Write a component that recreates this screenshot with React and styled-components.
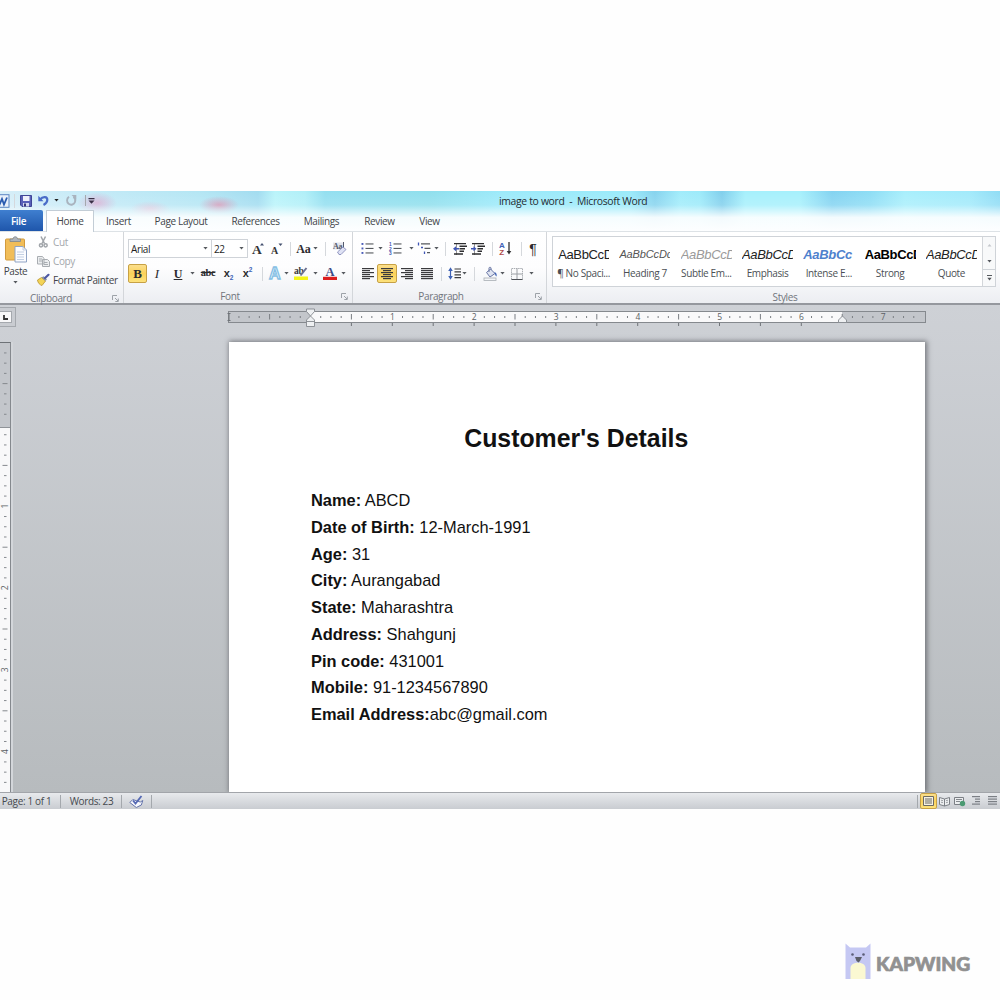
import React from 'react';
import styled, { createGlobalStyle } from 'styled-components';

const UI_FONT = '"Open Sans", "Noto Sans", sans-serif';
const DOC_FONT = '"Liberation Sans", Arial, sans-serif';
const SERIF = '"Liberation Serif", "Times New Roman", serif';

const GlobalStyle = createGlobalStyle`
  * {
    box-sizing: border-box;
  }
  body {
    margin: 0;
    background: #fff;
    overflow: hidden;
  }
  svg {
    display: block;
    overflow: visible;
    flex: none;
  }
`;

const Screen = styled.div`
  width: 1000px;
  height: 1000px;
  padding-top: 191px;
  background: #fefefe;
  display: flex;
  flex-direction: column;
  overflow: hidden;
`;

const WordWindow = styled.div`
  height: 618px;
  flex: none;
  display: flex;
  flex-direction: column;
  font-family: ${UI_FONT};
  font-size: 10px;
  letter-spacing: -0.36px;
  color: #3f4348;
  white-space: nowrap;
`;

/* title bar and tabs share one glass background */
const Chrome = styled.div`
  height: 40px;
  flex: none;
  background:
    linear-gradient(180deg, rgba(255,255,255,0) 0%, rgba(255,255,255,.15) 35%, rgba(255,255,255,.9) 66%, #fdfeff 100%),
    radial-gradient(ellipse 20px 9px at 219px 14px, rgba(222,130,165,.7), transparent),
    radial-gradient(ellipse 20px 11px at 97px 12px, rgba(222,150,195,.65), transparent),
    radial-gradient(ellipse 20px 8px at 150px 18px, rgba(240,170,200,.5), transparent),
    linear-gradient(90deg, #d6eef8 0, #c4eaf7 90px, #b4e6f4 200px, #a2dcf0 258px, #b9f4fa 275px, #b0eff8 305px, #93dff0 325px, #8fdfed 430px, #9ceafa 500px, #9aeafa 630px, #86d3ee 655px, #a0ecfb 680px, #9ceafa 700px, #80cfec 722px, #a6f0fc 745px, #a6f0fc 800px, #83d3f1 832px, #8dddf5 870px, #a8effc 905px, #a2eafb 970px, #8fdcf5 1000px);
`;

const TitleBar = styled.div`
  height: 19px;
  display: flex;
  align-items: center;
  color: #252b30;
  font-size: 10.4px;
  letter-spacing: -0.33px;
`;

const QuickAccess = styled.div`
  width: 499px;
  flex: none;
  display: flex;
  align-items: center;
`;

const Tabs = styled.div`
  height: 21px;
  display: flex;
`;

const Tab = styled.div`
  width: ${p => p.$w}px;
  height: 21px;
  display: flex;
  align-items: center;
  justify-content: center;
  position: relative;
  padding-top: 1px;
  ${p => p.$active && 'height: 22px; background: #fff; border: 1px solid #c3cdd6; border-bottom: 0; margin-left: 3px; padding: 0 0 1px;'}
  ${p => p.$file && 'background: linear-gradient(#3f7fd0, #1f56ab); color: #fff; font-weight: 600; padding-right: 6px; border-radius: 0 2px 0 0;'}
`;

const Ribbon = styled.div`
  height: 74px;
  flex: none;
  display: flex;
  background: linear-gradient(#fff 0, #fdfdfe 50%, #eceef2 100%);
  border-top: 1px solid #dde2e6;
  border-bottom: 2px solid #95989e;
`;

const Group = styled.div`
  width: ${p => p.$w}px;
  height: 71px;
  padding: 4px 0 0 ${p => p.$pad}px;
  border-right: 1px solid ${p => (p.$last ? 'transparent' : '#d3d6da')};
  display: flex;
  flex-direction: column;
  flex: none;
`;

const Row = styled.div`
  height: 25px;
  display: flex;
  align-items: center;
`;

const GroupFoot = styled.div`
  flex: 1;
  display: flex;
  align-items: center;
  justify-content: flex-end;
  padding: 3px 4px 0 0;
  color: #70757c;
`;

const GroupName = styled.span`
  width: ${p => p.$w}px;
  margin-right: ${p => p.$gap}px;
  line-height: 12px;
  text-align: center;
`;

const Cell = styled.div`
  width: ${p => p.$w}px;
  flex: none;
  display: flex;
  align-items: center;
  justify-content: center;
  ${p => p.$on && `
    height: ${p.$h || 19}px;
    background: linear-gradient(#fbdf8d, #fbd25a 50%, #fde27c);
    border: 1px solid #c7a145;
    border-radius: 2px;
  `}
`;

const Glyph = styled.span`
  font-family: ${p => (p.$sans ? DOC_FONT : SERIF)};
  font-size: ${p => p.$size || 13}px;
  font-weight: ${p => (p.$thin ? 400 : 700)};
  font-style: ${p => (p.$italic ? 'italic' : 'normal')};
  text-decoration: ${p => p.$deco || 'none'};
  color: ${p => p.$color || '#2b2b2e'};
  line-height: 1;
  letter-spacing: ${p => p.$track || 0}px;

  sub, sup {
    font-size: 6.5px;
    line-height: 0;
    color: #3f62b5;
  }
`;

const Rule = styled.i`
  width: 1px;
  height: ${p => p.$h || 14}px;
  background: ${p => (p.$dark ? '#a4a8ad' : '#d5d8dc')};
`;

const Combo = styled.div`
  width: ${p => p.$w}px;
  height: 19px;
  padding: 0 3px 0 2px;
  border: 1px solid #cfd3d8;
  margin-right: -1px;
  background: #fff;
  display: flex;
  align-items: center;
  justify-content: space-between;
  color: #1f1f1f;
`;

const ClipBody = styled.div`
  height: 56px;
  display: flex;
`;

const Paste = styled.div`
  width: 31px;
  display: flex;
  flex-direction: column;
  align-items: center;

  span {
    line-height: 13px;
    margin: 2px 0 3px;
  }
`;

const ClipActions = styled.div`
  padding: 0 0 0 6px;
  margin-top: -3px;
`;

const ClipAction = styled.div`
  height: 18.7px;
  display: flex;
  align-items: center;
  gap: 3px;
  color: ${p => (p.$off ? '#a3a7ab' : '#3f4348')};
`;

const Gallery = styled.div`
  width: 444px;
  height: 51px;
  border: 1px solid #cfd3d8;
  background: #fff;
  display: flex;
`;

const StyleItem = styled.div`
  width: 61.3px;
  flex: none;
  display: flex;
  flex-direction: column;
  align-items: center;
  padding-top: 9px;
`;

const Sample = styled.div`
  width: 51px;
  height: 18px;
  line-height: 17px;
  overflow: hidden;
  font-family: ${DOC_FONT};
  font-size: ${p => p.$size || 13}px;
  letter-spacing: ${p => p.$track || -0.35}px;
  font-weight: ${p => (p.$bold ? 700 : 400)};
  font-style: ${p => (p.$italic ? 'italic' : 'normal')};
  color: ${p => p.$color || '#222'};
`;

const StyleName = styled.div`
  line-height: 13px;
  margin-top: 3px;
  color: #4b4f54;
`;

const GalleryScroll = styled.div`
  flex: 1;
  border-left: 1px solid #d3d6da;
  display: flex;
  flex-direction: column;

  div {
    flex: 1;
    display: flex;
    align-items: center;
    justify-content: center;
    background: #f8f9fa;
  }
  div + div + div {
    border-top: 1px solid #cfd3d8;
  }
`;

const Workspace = styled.div`
  height: 487px;
  flex: none;
  display: flex;
  background: linear-gradient(#ced1d6, #b7bbbe);
  overflow: hidden;
`;

const LeftRail = styled.div`
  width: 229px;
  flex: none;
  padding-top: 2px;
`;

const TabSelector = styled.div`
  width: 16px;
  height: 20px;
  border: 1px solid #a5a9ae;
  border-left: 0;
  background: #c9ccd1;
  display: flex;
  align-items: center;
  margin-bottom: 15px;

  div {
    width: 12px;
    height: 12px;
    background: #f8f8f9;
    border: 1px solid #a5a9ae;
    border-left: 0;
    display: flex;
    align-items: center;
    justify-content: center;
  }
`;

const VRuler = styled.div`
  width: 11px;
  height: 451px;
  border-right: 1px solid #85898e;
  border-top: 1px solid #6e7277;
  background: linear-gradient(#c3c6cb 84px, #8f9398 84px, #8f9398 85px, #f8f8f9 85px);
  box-shadow: 2px 0 0 #d3d6da;
`;

const Canvas = styled.div`
  width: 697px;
  flex: none;
  display: flex;
  flex-direction: column;
  padding-top: 6px;
`;

const HRuler = styled.div`
  height: 12px;
  flex: none;
  margin-bottom: 19px;
  margin-left: -1px;
  border: 1px solid #85898e;
  background: linear-gradient(90deg, #c3c6cb 81px, #f9f9fa 81px, #f9f9fa 613px, #c3c6cb 613px);
`;

const Paper = styled.div`
  width: 695.5px;
  flex: 1;
  background: #fff;
  box-shadow: 1px 0 5px 1px rgba(60, 62, 68, .6);
  font-family: ${DOC_FONT};
  color: #111;
  letter-spacing: 0;
  padding: 82px 0 0 82px;
`;

const DocTitle = styled.h1`
  margin: 0 83px 33px 0;
  height: 30px;
  line-height: 30px;
  font-size: 24.85px;
  text-align: center;
`;

const Line = styled.p`
  margin: 0;
  height: 26.75px;
  line-height: 26.75px;
  font-size: 16.4px;
`;

const StatusBar = styled.div`
  height: 17px;
  flex: none;
  display: flex;
  align-items: center;
  padding-left: 1px;
  border-top: 1px solid #a2a5aa;
  background: linear-gradient(#e8eaed, #c9ccd1);
  overflow: hidden;
  color: #45494e;
`;

const StatusSpace = styled.div`
  flex: 1;
`;

const Watermark = styled.div`
  display: flex;
  align-items: center;
  padding: 134px 0 0 844px;
`;

const Brand = styled.span`
  margin: 5px 0 0 4px;
  font-family: Lato, "Open Sans", sans-serif;
  font-weight: 900;
  font-size: 19.3px;
  line-height: 24px;
  color: #919191;
  -webkit-text-stroke: .7px #919191;
`;

const Arrow = ({ color = '#55595e' }) => (
  <svg width="5" height="3" viewBox="0 0 5 3"><path d="M.4 0h4.2L2.5 2.6z" fill={color} /></svg>
);

const Drop = ({ w = 5 }) => <Cell $w={w}><Arrow /></Cell>;
const Divider = ({ w }) => <Cell $w={w}><Rule /></Cell>;

const Launcher = () => (
  <svg width="7" height="7" viewBox="0 0 7 7" fill="none" stroke="#9da2a8">
    <path d="M.5 5V.5H5M3 3l3 3M6.3 3.5v3h-3" />
  </svg>
);

// rows: [x, width] per text line, one every `step` px
const TextLines = ({ rows, step = 2, w = 13, color = '#3a3a3d' }) => (
  <svg width={w} height={rows.length * step} viewBox={`0 0 ${w} ${rows.length * step}`}>
    {rows.map(([x, len], i) => (
      <rect key={i} x={x} y={i * step} width={len} height="1.2" fill={color} />
    ))}
  </svg>
);

const WordLogo = () => (
  <svg width="10" height="14" viewBox="0 0 10 14">
    <rect x="-4" y=".7" width="13" height="12.6" fill="#e9f1fb" stroke="#5b86c4" />
    <path d="M-2 3.5l1.6 7L2 5l2 5.500L7 3.500" fill="none" stroke="#2a5cb0" strokeWidth="1.8" />
  </svg>
);

const Save = () => (
  <svg width="12" height="12" viewBox="0 0 12 12">
    <path d="M.5.5h11v11H2L.5 10z" fill="#5960b8" stroke="#3f4596" />
    <rect x="3" y="1" width="6.500" height="5" fill="#eef0fb" />
    <rect x="3" y="8" width="6" height="3.500" fill="#d5d8ee" />
    <rect x="4" y="8.500" width="2" height="3" fill="#33397f" />
  </svg>
);

const Undo = () => (
  <svg width="11" height="11" viewBox="0 0 11 11" fill="none" stroke="#4a6cc8" strokeWidth="2.200">
    <path d="M2 4.500C5 1 9.500 1.500 9.300 5c-.1 2.500-2 4-3.800 5" />
    <path d="M.3.800v5.500h5.200z" fill="#4a6cc8" stroke="none" />
  </svg>
);

const Redo = () => (
  <svg width="11" height="11" viewBox="0 0 11 11" fill="none" stroke="#a9b3be" strokeWidth="1.900">
    <path d="M3 1.700C.5 3.500.5 7 2.600 8.800c2.300 1.700 5.500.8 6.400-1.800.7-2-.1-4-1.500-5.200" />
    <path d="M5.500 0h4.800v4.600z" fill="#a9b3be" stroke="none" />
  </svg>
);

const PasteIcon = () => (
  <svg width="24" height="27" viewBox="0 0 24 27">
    <rect x="1.500" y="3" width="19" height="21" rx="1" fill="#f1bd58" stroke="#d29a3d" />
    <path d="M6 5.500V3h3c0-3 4.500-3 4.500 0h3v2.500z" fill="#aeb4bb" stroke="#7e858d" strokeWidth=".8" />
    <path d="M11 10.500h8l3.500 3.500v12H11z" fill="#fbfcff" stroke="#8fa3c4" />
    <path d="M19 10.500V14h3.500M13 16h7M13 18.500h7M13 21h7M13 23.500h7" fill="none" stroke="#b5c4dc" strokeWidth=".8" />
  </svg>
);

const Cut = () => (
  <svg width="13" height="12" viewBox="0 0 13 12" fill="none" stroke="#a0a4a9" strokeWidth="1.500">
    <path d="M4 .5l3.500 7M8.500.5L5 7.500" />
    <circle cx="4" cy="9.300" r="1.600" />
    <circle cx="8.600" cy="9.300" r="1.600" />
  </svg>
);

const Copy = () => (
  <svg width="13" height="11" viewBox="0 0 13 11" fill="#eceef0" stroke="#a8acb1">
    <path d="M.5.500h5L7 2.500v5.500H.5zM5.500 3.500h5L12.500 5.500v5h-7z" />
    <path d="M2 3h3M2 5h3M7 6.500h3.500M7 8.500h4" />
  </svg>
);

const Brush = () => (
  <svg width="13" height="12" viewBox="0 0 13 12">
    <path d="M.5 6l4-2.500 4 3.500L5 11.500C3 11 .8 9 .5 6z" fill="#f3d457" stroke="#b9932f" strokeWidth=".8" />
    <path d="M4.500 3.500l2-1.200 3.500 3L8.500 7z" fill="#8c93a0" />
    <path d="M8 4L11.500.800" stroke="#4d58a3" strokeWidth="2.200" strokeLinecap="round" />
  </svg>
);

const GrowFont = ({ down }) => (
  <svg width="14" height="14" viewBox="0 0 14 14">
    <text x="1" y="11.800" fontFamily={SERIF} fontWeight="700" fontSize={down ? 10 : 13.5} fill="#333">A</text>
    <path d={down ? 'M8.500 1.500h4L10.500 4z' : 'M9 3.500h4L11 1z'} fill="#44506e" />
  </svg>
);

const ClearFormat = () => (
  <svg width="15" height="15" viewBox="0 0 15 15">
    <rect x="1" y="1.500" width="11" height="7" fill="#e4e6ee" />
    <text x="1" y="7.500" fontFamily={SERIF} fontWeight="700" fontSize="8" fill="#555a6c">Aa</text>
    <path d="M11.500 1v6.500" stroke="#555a6c" />
    <path d="M5.500 11L11 6l3 2.500-5 5H7z" fill="#dfe2f4" stroke="#7c82b4" strokeWidth=".8" />
  </svg>
);

const TextEffects = () => (
  <svg width="14" height="14" viewBox="0 0 14 14">
    <text
      x="1" y="12" fontFamily={DOC_FONT} fontWeight="700" fontSize="16"
      fill="#e9f6fd" stroke="#86bfe4" strokeWidth="1.300"
    >A</text>
  </svg>
);

const Highlight = () => (
  <svg width="16" height="15" viewBox="0 0 16 15">
    <text x="1" y="8" fontFamily={SERIF} fontWeight="700" fontSize="9.500" fill="#3a3a3d">ab</text>
    <path d="M7.500 9.500L13.500 2" stroke="#6d7292" strokeWidth="2" />
    <rect x="1" y="10.500" width="14" height="3.500" fill="#f4f417" />
  </svg>
);

const FontColor = () => (
  <svg width="14" height="15" viewBox="0 0 14 15">
    <text x="2.500" y="9.500" fontFamily={SERIF} fontWeight="700" fontSize="12.500" fill="#3d4b86">A</text>
    <rect x="0" y="10.800" width="14" height="3.200" fill="#dc1e1e" />
  </svg>
);

const Bullets = ({ numbered }) => (
  <svg width="13" height="13" viewBox="0 0 13 13">
    {[1, 5.5, 10].map((y, i) => (
      <g key={y}>
        {numbered
          ? <text x="0" y={y + 3} fontFamily={DOC_FONT} fontSize="4.800" fontWeight="700" fill="#3f55b5">{i + 1}</text>
          : <rect x=".5" y={y} width="1.900" height="1.900" fill="#4b5cb8" />}
        <rect x="4.500" y={y + 0.4} width="8" height="1.100" fill="#55585d" />
      </g>
    ))}
  </svg>
);

const Multilevel = () => (
  <svg width="15" height="13" viewBox="0 0 15 13">
    <path d="M1.500.500v3M4 5.500h2M7.500 9.500v2.500" stroke="#3f55b5" strokeWidth="1.300" />
    <path d="M4 1.800h9M7.500 6.300h6M10 10.700h3" stroke="#55585d" strokeWidth="1.200" />
  </svg>
);

const Indent = ({ right }) => (
  <svg width="14" height="12" viewBox="0 0 14 12">
    <path d="M1 .6h12M6.500 3.300H14M6.500 5.700H12M6.500 8.200H11M1 11h9" stroke="#2e2e31" strokeWidth="1.400" />
    <path d="M3.500.5v11" stroke="#2e2e31" strokeDasharray="1 1" />
    <path d={right ? 'M2.500 3.200L5.500 5.700 2.500 8.200zM0 5h3v1.500H0z' : 'M3 3.200L0 5.700l3 2.500zM3 5h3v1.500H3z'} fill="#3f55b5" />
  </svg>
);

const Sort = () => (
  <svg width="13" height="15" viewBox="0 0 13 15">
    <text x="0" y="6.500" fontFamily={DOC_FONT} fontWeight="700" fontSize="8" fill="#3f62b5">A</text>
    <text x=".3" y="14.300" fontFamily={DOC_FONT} fontWeight="700" fontSize="8" fill="#b04a4a">Z</text>
    <path d="M10 1v10.500" stroke="#2e2e31" strokeWidth="1.300" />
    <path d="M7.700 10h4.600L10 13.500z" fill="#2e2e31" />
  </svg>
);

const LineSpacing = () => (
  <svg width="13" height="13" viewBox="0 0 13 13">
    <path d="M2.500 2.500v8" stroke="#3f62b5" strokeWidth="1.200" />
    <path d="M.2 4L2.500.3 4.800 4zM.2 9l2.300 3.700L4.800 9z" fill="#3f62b5" />
    <path d="M6.500 2h6.500M6.500 4.900H13M6.500 7.800H13M6.500 10.700H13" stroke="#3a3a3d" strokeWidth="1.200" />
  </svg>
);

const Shading = () => (
  <svg width="15" height="14" viewBox="0 0 15 14">
    <path d="M3.500 5.500L7.500 2l4.500 4.500-5 3.500z" fill="#dfe4f1" stroke="#6976a4" />
    <path d="M6 5V1c0-1 2-1 2 0v2" fill="none" stroke="#6976a4" />
    <path d="M11.500 5c2 .5 2.500 2.500 2 4.500-1-.5-1.500-2-2-4.500z" fill="#3f62b5" />
    <rect x="1" y="11" width="12" height="2.500" fill="#f4f5f7" stroke="#a9adb3" strokeWidth=".8" />
  </svg>
);

const Borders = () => (
  <svg width="12" height="12" viewBox="0 0 12 12" fill="none">
    <path d="M.5.500h11v11H.5z" stroke="#a9adb2" strokeDasharray="1.500 .7" />
    <path d="M6 .5v11M.5 6h11" stroke="#9a9ea4" />
    <path d="M.5 11.500h11" stroke="#4c5056" />
  </svg>
);

const Proofing = () => (
  <svg width="15" height="13" viewBox="0 0 15 13">
    <path d="M.8 7.500l3-3 3.500 1.200 4 1.300 2.500-1.500-1.500 4.500-5 2.500z" fill="#f7f8fc" stroke="#6574ac" />
    <path d="M4 5.500l2.500 3L12.500 1" fill="none" stroke="#5468b4" strokeWidth="1.800" />
  </svg>
);

const PrintLayout = () => (
  <svg width="11" height="10" viewBox="0 0 11 10" fill="none" stroke="#6c6a63">
    <path d="M.5.500h10v9H.5z" fill="#f4f1e4" />
    <path d="M2 3h7M2 5h7M2 7h7" />
  </svg>
);

const ReadingView = () => (
  <svg width="11" height="11" viewBox="0 0 11 11" fill="#eceef0" stroke="#7b7f85">
    <path d="M.5 1.500L5.500 3l5-1.500v7l-5 1.500-5-1.500zM5.500 3v7" />
    <path d="M2 4.200l2 .5M2 6.200l2 .5M7 4.700l2-.5M7 6.700l2-.5" strokeWidth=".7" />
  </svg>
);

const WebLayout = () => (
  <svg width="12" height="11" viewBox="0 0 12 11">
    <path d="M.5 1.500h9v7h-9z" fill="#eceef0" stroke="#7b7f85" />
    <path d="M2 3.500h6M2 5.500h4" stroke="#6b6f75" strokeWidth=".8" />
    <circle cx="8.500" cy="7.500" r="2.700" fill="#4b9a72" />
  </svg>
);

// eighth-inch marks; whole inches carry their number
const INCH = 81.8;

const HorizontalMarks = () => {
  const marks = [];
  for (let n = -7; n <= 59; n += 1) {
    const x = 81.5 + (n * INCH) / 8;
    if (n % 8 === 0 && n !== 0) {
      marks.push(
        <text key={n} x={x} y="8" textAnchor="middle" fontFamily={UI_FONT} fontSize="8.500" fill="#5b5f64">{n / 8}</text>,
      );
    } else if (n !== 0) {
      const half = n % 4 === 0;
      marks.push(<rect key={n} x={x - 0.5} y={half ? 2 : 4} width="1" height={half ? 5.5 : 2} fill="#7a7e83" />);
    }
    if (n > 0 && n <= 48 && n % 4 === 0) {
      marks.push(<rect key={`t${n}`} x={x - 0.5} y="11" width="1" height="3" fill="#6f7378" />);
    }
  }
  return (
    <svg width="695" height="10" viewBox="0 0 695 10">
      {marks}
      <path d="M-1.500 1.500h3M0 1.500v7M-1.500 8.500h3" stroke="#6f7378" fill="none" />
      <g fill="#eef0f2" stroke="#85898e" strokeWidth=".9">
        <path d="M77.500-3h8v2.500l-4 4.500-4-4.500z" />
        <path d="M81.500 4l4 4v6.500h-8V8zM77.500 9.500h8" />
        <path d="M613.500 4l4 4v2.500h-8V8z" />
      </g>
    </svg>
  );
};

const VerticalMarks = () => {
  const marks = [];
  for (let n = -7; n <= 35; n += 1) {
    const y = 81.5 + (n * INCH) / 8;
    if (n > 0 && n % 8 === 0) {
      marks.push(
        <text
          key={n} x="5" y={y} dy="2.800" textAnchor="middle" transform={`rotate(-90 5 ${y})`}
          fontFamily={UI_FONT} fontSize="8.500" fill="#5b5f64"
        >{n / 8}</text>,
      );
    } else if (n !== 0) {
      const half = n % 4 === 0;
      marks.push(<rect key={n} x={half ? 2.5 : 4} y={y - 0.5} width={half ? 5 : 2.5} height="1" fill="#85898e" />);
    }
  }
  return <svg width="10" height="449" viewBox="0 0 10 449">{marks}</svg>;
};

const KapwingCat = () => (
  <svg width="28" height="37" viewBox="0 0 28 37">
    <path d="M1.500.500L6 4.500h16L26.500.500v35.500h-25z" fill="#c5c8f3" />
    <path d="M6.500 36V25c0-7 15-7 15 0v11z" fill="#fbf8d2" />
    <circle cx="8.500" cy="11.500" r="1.300" fill="#5b5d78" />
    <circle cx="19.500" cy="11.500" r="1.300" fill="#5b5d78" />
    <path d="M11 14h7l-2 4-1.500 1.500L12.500 18z" fill="#5b5d68" />
  </svg>
);

const TABS = [
  ['Insert', 49], ['Page Layout', 76], ['References', 73], ['Mailings', 59], ['Review', 57], ['View', 43],
];

const STYLES = [
  { name: '¶ No Spaci...', sample: 'AaBbCcD' },
  { name: 'Heading 7', sample: 'AaBbCcDd', size: 11, track: -0.15, italic: true, color: '#555' },
  { name: 'Subtle Em...', sample: 'AaBbCcD', italic: true, color: '#9a9a9a' },
  { name: 'Emphasis', sample: 'AaBbCcD', italic: true },
  { name: 'Intense E...', sample: 'AaBbCc', italic: true, bold: true, color: '#4e81cd' },
  { name: 'Strong', sample: 'AaBbCcD', bold: true, color: '#000' },
  { name: 'Quote', sample: 'AaBbCcD', italic: true },
];

const DETAILS = [
  ['Name:', ' ABCD'],
  ['Date of Birth:', ' 12-March-1991'],
  ['Age:', ' 31'],
  ['City:', ' Aurangabad'],
  ['State:', ' Maharashtra'],
  ['Address:', ' Shahgunj'],
  ['Pin code:', ' 431001'],
  ['Mobile:', ' 91-1234567890'],
  ['Email Address:', 'abc@gmail.com'],
];

const LONG = 12;
const ragged = side => [LONG, 8, LONG, 8, LONG, 8].map((len) => {
  if (side === 'left') return [0, len];
  if (side === 'right') return [LONG - len, len];
  return [(LONG - len) / 2, len];
});

const ClipboardGroup = () => (
  <Group $w={124} $pad={0}>
    <ClipBody>
      <Paste>
        <PasteIcon />
        <span>Paste</span>
        <Arrow />
      </Paste>
      <ClipActions>
        <ClipAction $off><Cut />Cut</ClipAction>
        <ClipAction $off><Copy />Copy</ClipAction>
        <ClipAction><Brush />Format Painter</ClipAction>
      </ClipActions>
    </ClipBody>
    <GroupFoot><GroupName $w={80} $gap={21}>Clipboard</GroupName><Launcher /></GroupFoot>
  </Group>
);

const FontGroup = () => (
  <Group $w={229} $pad={4}>
    <Row>
      <Combo $w={84}>Arial<Arrow /></Combo>
      <Combo $w={37}>22<Arrow /></Combo>
      <Cell $w={21}><GrowFont /></Cell>
      <Cell $w={18}><GrowFont down /></Cell>
      <Divider w={8} />
      <Cell $w={19}><Glyph $size={12}>Aa</Glyph></Cell>
      <Drop />
      <Divider w={14} />
      <Cell $w={14}><ClearFormat /></Cell>
    </Row>
    <Row>
      <Cell $w={19} $on><Glyph>B</Glyph></Cell>
      <Cell $w={20}><Glyph $thin $italic>I</Glyph></Cell>
      <Cell $w={22}><Glyph $size={12} $deco="underline">U</Glyph></Cell>
      <Drop w={7} />
      <Cell $w={24}><Glyph $size={10.5} $track={-0.4} $deco="line-through">abc</Glyph></Cell>
      <Cell $w={17}><Glyph $sans $size={11}>x<sub>2</sub></Glyph></Cell>
      <Cell $w={21}><Glyph $sans $size={11}>x<sup>2</sup></Glyph></Cell>
      <Divider w={8} />
      <Cell $w={18}><TextEffects /></Cell>
      <Drop />
      <Cell $w={24}><Highlight /></Cell>
      <Drop />
      <Cell $w={23}><FontColor /></Cell>
      <Drop />
    </Row>
    <GroupFoot><GroupName $w={80} $gap={71}>Font</GroupName><Launcher /></GroupFoot>
  </Group>
);

const ParagraphGroup = () => (
  <Group $w={194} $pad={5}>
    <Row>
      <Cell $w={19}><Bullets /></Cell>
      <Drop w={6} />
      <Cell $w={25}><Bullets numbered /></Cell>
      <Drop w={6} />
      <Cell $w={20}><Multilevel /></Cell>
      <Drop />
      <Divider w={13} />
      <Cell $w={16}><Indent /></Cell>
      <Cell $w={20}><Indent right /></Cell>
      <Divider w={8} />
      <Cell $w={18}><Sort /></Cell>
      <Divider w={14} />
      <Cell $w={10}><Glyph $sans $thin $size={14}>¶</Glyph></Cell>
    </Row>
    <Row>
      <Cell $w={19}><TextLines w={LONG} rows={ragged('left')} /></Cell>
      <Cell $w={20} $on><TextLines w={LONG} rows={ragged('center')} /></Cell>
      <Cell $w={20}><TextLines w={LONG} rows={ragged('right')} /></Cell>
      <Cell $w={19}><TextLines w={LONG} rows={Array(6).fill([0, LONG])} /></Cell>
      <Divider w={10} />
      <Cell $w={16}><LineSpacing /></Cell>
      <Drop />
      <Divider w={14} />
      <Cell $w={18}><Shading /></Cell>
      <Drop w={6} />
      <Cell $w={24}><Borders /></Cell>
      <Drop />
    </Row>
    <GroupFoot><GroupName $w={80} $gap={54}>Paragraph</GroupName><Launcher /></GroupFoot>
  </Group>
);

const StylesGroup = () => (
  <Group $w={453} $pad={5} $last>
    <Gallery>
      {STYLES.map(s => (
        <StyleItem key={s.name}>
          <Sample $size={s.size} $track={s.track} $bold={s.bold} $italic={s.italic} $color={s.color}>
            {s.sample}
          </Sample>
          <StyleName>{s.name}</StyleName>
        </StyleItem>
      ))}
      <GalleryScroll>
        <div><svg width="5" height="3" viewBox="0 0 5 3"><path d="M.5 2.500h4L2.500 0z" fill="#c4c7cb" /></svg></div>
        <div><Arrow /></div>
        <div>
          <svg width="5" height="6" viewBox="0 0 5 6"><path d="M0 0h5v1H0zM.3 2.800h4.400L2.500 5.500z" fill="#55595e" /></svg>
        </div>
      </GalleryScroll>
    </Gallery>
    <GroupFoot><GroupName $w={80} $gap={170}>Styles</GroupName></GroupFoot>
  </Group>
);

const App = () => (
  <Screen>
    <GlobalStyle />
    <WordWindow>
      <Chrome>
        <TitleBar>
          <QuickAccess>
            <WordLogo />
            <Divider w={8} />
            <Cell $w={15}><Save /></Cell>
            <Cell $w={21}><Undo /></Cell>
            <Cell $w={5}><Arrow color="#222" /></Cell>
            <Cell $w={25}><Redo /></Cell>
            <Cell $w={3}><Rule $dark $h={11} /></Cell>
            <Cell $w={9}>
              <svg width="7" height="6" viewBox="0 0 7 6"><path d="M.5 0h6v1.200h-6zM.5 2.500h6l-3 3.200z" fill="#3a2f45" /></svg>
            </Cell>
          </QuickAccess>
          <span>image to word&nbsp; -&nbsp; Microsoft Word</span>
        </TitleBar>
        <Tabs>
          <Tab $w={43} $file>File</Tab>
          <Tab $w={48} $active>Home</Tab>
          {TABS.map(([label, w]) => <Tab key={label} $w={w}>{label}</Tab>)}
        </Tabs>
      </Chrome>
      <Ribbon>
        <ClipboardGroup />
        <FontGroup />
        <ParagraphGroup />
        <StylesGroup />
      </Ribbon>
      <Workspace>
        <LeftRail>
          <TabSelector>
            <div><svg width="5" height="5" viewBox="0 0 5 5"><path d="M1 0v4h4" fill="none" stroke="#333" strokeWidth="1.800" /></svg></div>
          </TabSelector>
          <VRuler><VerticalMarks /></VRuler>
        </LeftRail>
        <Canvas>
          <HRuler><HorizontalMarks /></HRuler>
          <Paper>
            <DocTitle>Customer&apos;s Details</DocTitle>
            {DETAILS.map(([label, value]) => (
              <Line key={label}><b>{label}</b>{value}</Line>
            ))}
          </Paper>
        </Canvas>
      </Workspace>
      <StatusBar>
        <Cell $w={51}>Page: 1 of 1</Cell>
        <Cell $w={17}><Rule $dark $h={13} /></Cell>
        <Cell $w={45}>Words: 23</Cell>
        <Cell $w={14}><Rule $dark $h={13} /></Cell>
        <Cell $w={16}><Proofing /></Cell>
        <Cell $w={15}><Rule $dark $h={13} /></Cell>
        <StatusSpace />
        <Cell $w={6}><Rule $dark $h={13} /></Cell>
        <Cell $w={17} $on $h={16}><PrintLayout /></Cell>
        <Cell $w={15}><ReadingView /></Cell>
        <Cell $w={16}><WebLayout /></Cell>
        <Cell $w={16}><TextLines w={8} rows={[[0, 8], [3, 5], [3, 5], [0, 8]]} step={2.5} color="#7b7f85" /></Cell>
        <Cell $w={16}><TextLines w={9} rows={[[0, 9], [0, 9], [0, 9], [0, 9]]} step={2.5} color="#7b7f85" /></Cell>
      </StatusBar>
    </WordWindow>
    <Watermark>
      <KapwingCat />
      <Brand>KAPWING</Brand>
    </Watermark>
  </Screen>
);

export default App;
